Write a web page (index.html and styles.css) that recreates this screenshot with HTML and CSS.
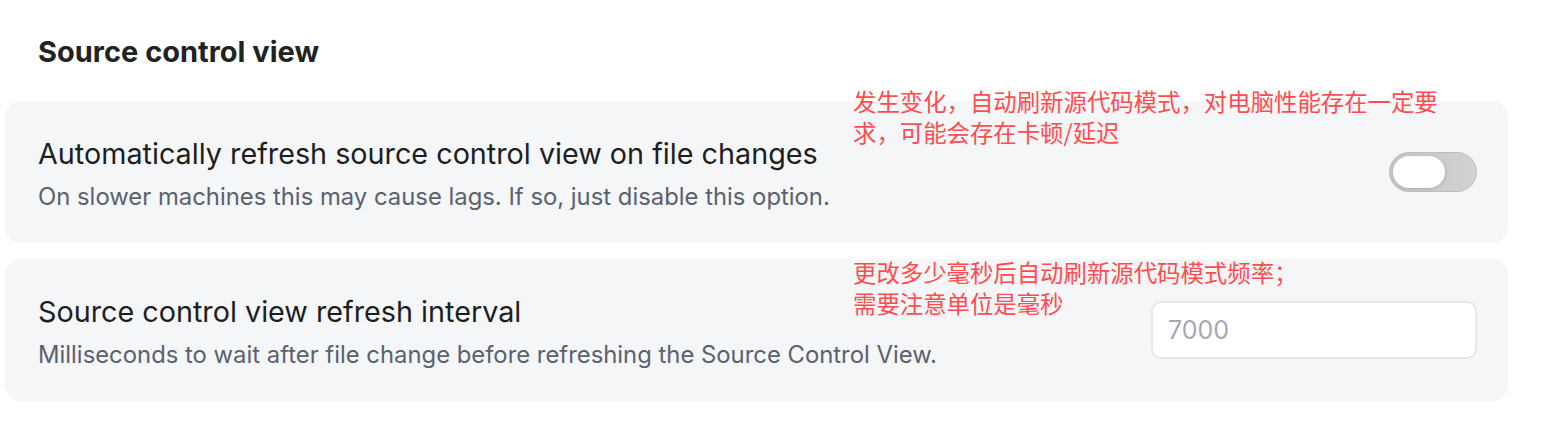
FILE: index.html
```html
<!DOCTYPE html>
<html lang="en">
<head>
    <meta charset="UTF-8">
    <title>Source control view</title>
    <link rel="stylesheet" href="styles.css">
</head>
<body>
    <h2 class="section-title">Source control view</h2>

    <div class="setting-item">
        <div class="setting-info">
            <div class="setting-name">Automatically refresh source control view on file changes</div>
            <div class="setting-desc">On slower machines this may cause lags. If so, just disable this option.</div>
        </div>
        <div class="setting-control">
            <div class="toggle">
                <div class="toggle-knob"></div>
            </div>
        </div>
        <div class="note note-first">发生变化，自动刷新源代码模式，对电脑性能存在一定要<br>求，可能会存在卡顿/延迟</div>
    </div>

    <div class="setting-item">
        <div class="setting-info">
            <div class="setting-name">Source control view refresh interval</div>
            <div class="setting-desc">Milliseconds to wait after file change before refreshing the Source Control View.</div>
        </div>
        <div class="setting-control">
            <input type="text" class="text-input" placeholder="7000">
        </div>
        <div class="note note-second">更改多少毫秒后自动刷新源代码模式频率；<br>需要注意单位是毫秒</div>
    </div>
</body>
</html>
```

FILE: styles.css
```css
body {
    margin: 0;
    padding: 0 38px 0 5px;
    background-color: #ffffff;
    font-family: Inter, "Noto Sans", sans-serif;
    color: #1f1f1f;
}
.section-title {
    margin: 0;
    padding: 34px 0 0 33px;
    height: 101px;
    box-sizing: border-box;
    font-size: 29px;
    line-height: 36px;
    font-weight: 700;
    color: #222222;
}
.setting-item {
    position: relative;
    display: flex;
    align-items: center;
    height: 142px;
    box-sizing: border-box;
    margin-bottom: 16px;
    padding: 0 31px 0 33px;
    background-color: #f5f6f8;
    border-radius: 16px;
}
.setting-info {
    flex: 1;
    padding-top: 4px;
}
.setting-name {
    font-size: 28.75px;
    line-height: 36px;
    color: #1e1e1e;
}
.setting-desc {
    margin-top: 10px;
    font-size: 23.85px;
    line-height: 30px;
    color: #5a626e;
}
.setting-control {
    display: flex;
    align-items: center;
}
.toggle {
    position: relative;
    width: 88px;
    height: 40px;
    box-sizing: border-box;
    border: 1px solid #bdbdbd;
    border-radius: 20px;
    background: linear-gradient(90deg, #c2c2c2, #d3d3d3);
}
.toggle-knob {
    position: absolute;
    left: 3px;
    top: 3px;
    width: 52px;
    height: 32px;
    border-radius: 16px;
    background-color: #ffffff;
    box-shadow: 1px 1px 3px rgba(0,0,0,0.12);
}
.text-input {
    width: 326px;
    height: 58px;
    box-sizing: border-box;
    padding: 0 15px;
    border: 2px solid #e6e8ec;
    border-radius: 10px;
    background-color: #ffffff;
    font-family: Inter, "Noto Sans", sans-serif;
    font-size: 25px;
    outline: none;
}
.text-input::placeholder {
    color: #a3a9b3;
}
.note {
    position: absolute;
    left: 848px;
    font-family: "Noto Sans CJK SC", sans-serif;
    font-size: 23.4px;
    line-height: 31px;
    color: #ff4d4f;
}
.note-first {
    top: -15px;
}
.note-second {
    top: -2px;
}
```
